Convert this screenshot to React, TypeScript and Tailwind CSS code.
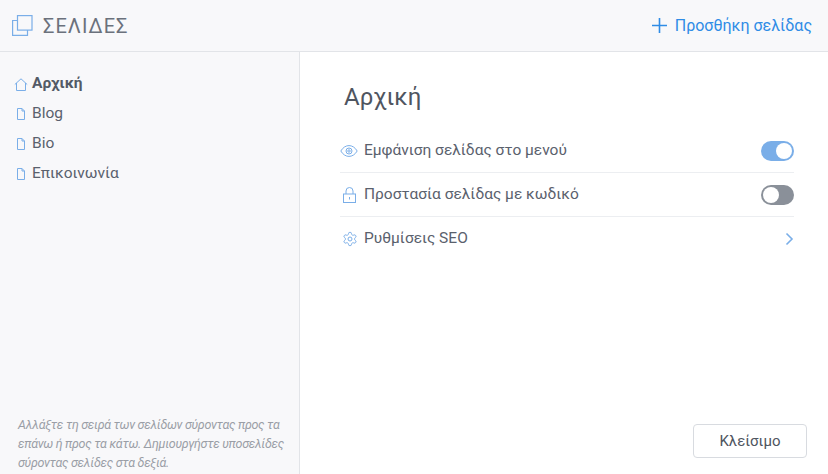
import React from "react";

const F = { fontFamily: "Roboto, 'Noto Sans', sans-serif" };

function PageIcon() {
  return (
    <svg width="10" height="12" viewBox="0 0 10 12" fill="none" stroke="#7aaee8" strokeWidth="1">
      <path d="M1.5 0.5h4.5l2.5 2.5v8.5h-7z M6 0.5v2.5h2.5" />
    </svg>
  );
}

function Toggle({ on }: { on: boolean }) {
  return (
    <div className={`w-[33px] h-[20px] rounded-full p-[2px] flex ${on ? "bg-[#7aaee8] justify-end" : "bg-[#8a9099] justify-start"}`}>
      <div className="w-[16px] h-[16px] rounded-full bg-white" />
    </div>
  );
}

export default function App() {
  return (
    <div className="w-[828px] h-[474px] flex flex-col bg-white text-[#5a616d] overflow-hidden" style={F}>
      <div className="h-[52px] shrink-0 flex items-center justify-between px-[12px] bg-[#f8f8fa] border-b border-[#e2e4e8]">
        <div className="flex items-center gap-[10px]">
          <svg width="21" height="21" viewBox="0 0 21 21" fill="none" stroke="#7aaee8" strokeWidth="1.2">
            <rect x="5.5" y="0.6" width="14.5" height="14.5" />
            <path d="M5.5 5.5H0.6V20.4H15.5V15.1" />
          </svg>
          <span className="text-[20px] text-[#6b717c] tracking-[1px]">ΣΕΛΙΔΕΣ</span>
        </div>
        <div className="flex items-center gap-[8px] text-[#2f8ce6] text-[16px] pr-[4px]">
          <svg width="15" height="15" viewBox="0 0 15 15" stroke="#2f8ce6" strokeWidth="1.6">
            <path d="M7.5 0v15M0 7.5h15" />
          </svg>
          <span>Προσθήκη σελίδας</span>
        </div>
      </div>
      <div className="flex flex-1 min-h-0">
        <div className="w-[300px] shrink-0 bg-[#f8f8fa] border-r border-[#e2e4e8] flex flex-col justify-between pt-[17px] pb-[2px]">
          <div className="flex flex-col px-[14px] text-[15.5px]">
            <div className="h-[30px] flex items-center gap-[4px] font-bold text-[#535a66]">
              <svg width="14" height="13" viewBox="0 0 14 13" fill="none" stroke="#7aaee8" strokeWidth="1">
                <path d="M0.8 6.5L7 0.8l6.2 5.7M2.5 5v7.5h9V5" />
              </svg>
              Αρχική
            </div>
            {["Blog", "Bio", "Επικοινωνία"].map((t) => (
              <div key={t} className="h-[30px] flex items-center gap-[6px] pl-[2px]">
                <PageIcon />
                {t}
              </div>
            ))}
          </div>
          <p className="pl-[18px] pr-[10px] text-[12.5px] italic leading-[19px] text-[#9a9ea6] tracking-[-0.3px]">
            Αλλάξτε τη σειρά των σελίδων σύροντας προς τα επάνω ή προς τα κάτω. Δημιουργήστε υποσελίδες σύροντας σελίδες στα δεξιά.
          </p>
        </div>
        <div className="flex-1 flex flex-col justify-between pl-[40px] pr-[34px] pt-[27px] pb-[16px]">
          <div>
            <h1 className="text-[24px] text-[#4f5560] mb-[14px] pl-[4px]">Αρχική</h1>
            <div className="flex flex-col text-[15.5px]">
              <div className="h-[44px] flex items-center justify-between border-b border-[#eceef1]">
                <div className="flex items-center gap-[6px]">
                  <svg width="18" height="12" viewBox="0 0 18 12" fill="none" stroke="#7aaee8" strokeWidth="1">
                    <path d="M0.8 6C3 2.3 6 0.6 9 0.6s6 1.7 8.2 5.4C15 9.7 12 11.4 9 11.4S3 9.7 0.8 6z" />
                    <circle cx="9" cy="6" r="3" />
                    <circle cx="9" cy="6" r="1.2" />
                  </svg>
                  Εμφάνιση σελίδας στο μενού
                </div>
                <Toggle on />
              </div>
              <div className="h-[44px] flex items-center justify-between border-b border-[#eceef1]">
                <div className="flex items-center gap-[8px] pl-[3px]">
                  <svg width="13" height="16" viewBox="0 0 13 16" fill="none" stroke="#7aaee8" strokeWidth="1">
                    <path d="M3 7V4a3.5 3.5 0 0 1 7 0v3" />
                    <rect x="0.5" y="7" width="12" height="8.5" />
                    <path d="M6.5 10v2.5" />
                  </svg>
                  Προστασία σελίδας με κωδικό
                </div>
                <Toggle on={false} />
              </div>
              <div className="h-[44px] flex items-center justify-between">
                <div className="flex items-center gap-[6px] pl-[2px]">
                  <svg width="16" height="16" viewBox="0 0 24 24" fill="none" stroke="#7aaee8" strokeWidth="1.5">
                    <path d="M12.22 2h-.44a2 2 0 0 0-2 2v.18a2 2 0 0 1-1 1.730l-.43.25a2 2 0 0 1-2 0l-.15-.08a2 2 0 0 0-2.73.73l-.22.38a2 2 0 0 0 .73 2.73l.15.1a2 2 0 0 1 1 1.72v.51a2 2 0 0 1-1 1.74l-.15.09a2 2 0 0 0-.73 2.73l.22.38a2 2 0 0 0 2.73.73l.15-.08a2 2 0 0 1 2 0l.43.25a2 2 0 0 1 1 1.73V20a2 2 0 0 0 2 2h.44a2 2 0 0 0 2-2v-.18a2 2 0 0 1 1-1.73l.43-.25a2 2 0 0 1 2 0l.15.08a2 2 0 0 0 2.73-.73l.22-.39a2 2 0 0 0-.73-2.73l-.15-.08a2 2 0 0 1-1-1.74v-.5a2 2 0 0 1 1-1.74l.15-.09a2 2 0 0 0 .73-2.730l-.22-.38a2 2 0 0 0-2.730-.73l-.15.08a2 2 0 0 1-2 0l-.43-.25a2 2 0 0 1-1-1.730V4a2 2 0 0 0-2-2z" />
                    <circle cx="12" cy="12" r="3" />
                  </svg>
                  Ρυθμίσεις SEO
                </div>
                <svg width="9" height="14" viewBox="0 0 9 14" fill="none" stroke="#7aaee8" strokeWidth="1.6">
                  <path d="M1.5 1.5L7 7l-5.5 5.5" />
                </svg>
              </div>
            </div>
          </div>
          <div className="flex justify-end">
            <button className="w-[114px] h-[34px] border border-[#d8dbe0] rounded-[4px] bg-white text-[15px] text-[#4f5560] mr-[-13px]">
              Κλείσιμο
            </button>
          </div>
        </div>
      </div>
    </div>
  );
}
